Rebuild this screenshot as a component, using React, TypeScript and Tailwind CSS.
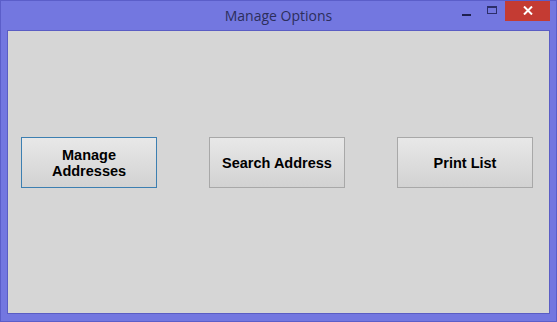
const buttons = [
  { label: 'Manage\nAddresses', focused: true },
  { label: 'Search Address', focused: false },
  { label: 'Print List', focused: false },
]

export default function App() {
  return (
    <div className="w-[557px] h-[322px] bg-[#7377e0] border border-[#5b5ec9] flex flex-col overflow-hidden">
      <div className="h-[29px] shrink-0 relative">
        <div className="w-full text-center pt-[6px] text-[14px] text-[#2c2e5c] font-['Open_Sans',sans-serif] leading-[18px]">
          Manage Options
        </div>
        <div className="absolute top-0 right-[6px] flex items-start">
          <div className="w-[26px] h-[20px] flex items-center justify-center">
            <div className="w-[9px] h-[2px] bg-[#1e2050] mt-[7px]" />
          </div>
          <div className="w-[26px] h-[20px] flex items-center justify-center">
            <div className="w-[10px] h-[8px] border border-[#2c2e6a] border-t-2 mt-[-2px]" />
          </div>
          <div className="w-[45px] h-[20px] bg-[#c43b33] flex items-center justify-center">
            <svg width="10" height="9" viewBox="0 0 10 9" className="mt-[-1px]">
              <path d="M1 0.5 L9 8.5 M9 0.5 L1 8.5" stroke="#ffffff" strokeWidth="2" />
            </svg>
          </div>
        </div>
      </div>
      <div className="mx-[6px] mb-[7px] flex-1 bg-[#d6d6d6] border border-[#5a5dc4] flex items-start pl-[13px] pt-[106px] gap-[52px]">
        {buttons.map(b => (
          <button
            key={b.label}
            type="button"
            className={`w-[136px] h-[51px] border flex items-center justify-center whitespace-pre-line text-[14.5px] leading-[16px] font-bold text-black font-['Liberation_Sans',Arial,sans-serif] bg-gradient-to-b from-[#e8e8e8] to-[#d2d2d2] ${
              b.focused ? 'border-[#3c7fb1]' : 'border-[#a8a8a8]'
            }`}
          >
            {b.label}
          </button>
        ))}
      </div>
    </div>
  )
}
